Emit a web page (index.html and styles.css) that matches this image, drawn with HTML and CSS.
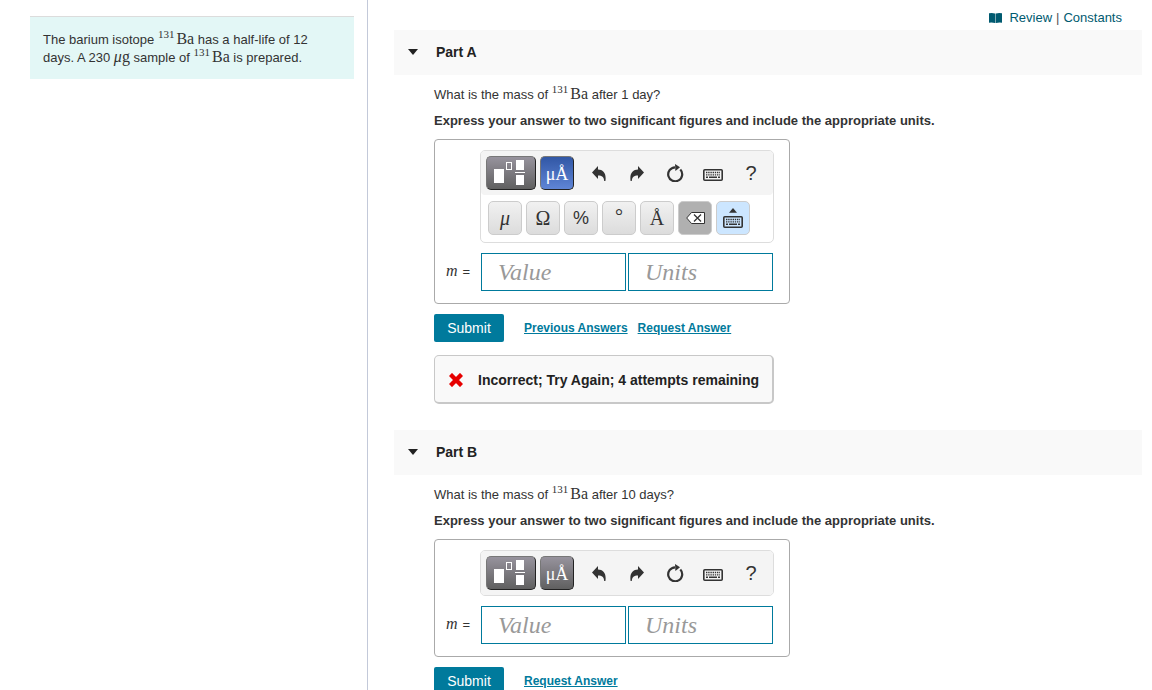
FILE: index.html
```html
<!DOCTYPE html>
<html lang="en">
<head>
  <meta charset="UTF-8">
  <meta name="viewport" content="width=device-width, initial-scale=1">
  <title>Barium half-life</title>
  <link rel="stylesheet" href="styles.css">
</head>
<body>
  <!-- shared icons -->
  <svg class="sprite" aria-hidden="true">
    <symbol id="i-template" viewBox="0 0 34 28">
      <rect x="0" y="10" width="10" height="14" fill="#fff"/>
      <rect x="12.500" y="3.500" width="5" height="7" fill="none" stroke="#fff"/>
      <rect x="22" y="1" width="8" height="10" fill="#fff"/>
      <rect x="21" y="13" width="10" height="1" fill="#fff"/>
      <rect x="22" y="16" width="8" height="10" fill="#fff"/>
    </symbol>
    <symbol id="i-undo" viewBox="0 0 14 15">
      <path d="M6 0v3.600c5.200 0 8.600 4 7.400 11.400h-1.200C12 10.800 10 9.400 6 9.400V13L0 6.600z" fill="#333"/>
    </symbol>
    <symbol id="i-redo" viewBox="0 0 14 15">
      <path d="M8 0v3.600C2.800 3.600-.6 7.600.6 15h1.200C2 10.800 4 9.400 8 9.400V13l6-6.400z" fill="#333"/>
    </symbol>
    <symbol id="i-reset" viewBox="0 0 17 18">
      <path d="M13.300 5.500A7 7 0 1 1 8 3.300" fill="none" stroke="#333" stroke-width="2.200"/>
      <path d="M8 0l5 3.300-4.600 3.600z" fill="#333"/>
    </symbol>
    <symbol id="i-keyboard" viewBox="0 0 20 12">
      <rect x=".8" y=".8" width="18.400" height="10.400" rx="1" fill="none" stroke="#333" stroke-width="1.600"/>
      <path d="M3 3.500h14M3 5.800h14" stroke="#333" stroke-width="1.300" stroke-dasharray="1.400 .8"/>
      <path d="M3 8.300h2M6 8.300h8M15 8.300h2" stroke="#333" stroke-width="1.400"/>
    </symbol>
    <symbol id="i-backspace" viewBox="0 0 19 12">
      <path d="M5.500.5h13v11h-13L.7 6z" fill="#fff" stroke="#333"/>
      <path d="M8 2.500l7 7M15 2.500l-7 7" stroke="#333" stroke-width="1.300"/>
    </symbol>
    <symbol id="i-keyboard-up" viewBox="0 0 20 20">
      <path d="M6 4.800L10 0l4 4.800z" fill="#333"/>
      <rect x=".8" y="8.800" width="18.400" height="10.400" rx="1" fill="none" stroke="#333" stroke-width="1.600"/>
      <path d="M3 11.500h14M3 13.800h14" stroke="#333" stroke-width="1.300" stroke-dasharray="1.400 .8"/>
      <path d="M3 16.300h2M6 16.300h8M15 16.300h2" stroke="#333" stroke-width="1.400"/>
    </symbol>
  </svg>

  <div class="page">
    <aside class="sidebar">
      <p class="intro">The barium isotope <span class="math"><sup>131</sup>Ba</span> has a half-life of 12 days. A 230 <span class="math"><i>μ</i>g</span> sample of <span class="math"><sup>131</sup>Ba</span> is prepared.</p>
    </aside>

    <main class="content">
      <nav class="top-links">
        <svg class="book" width="13" height="10" viewBox="0 0 13 10" aria-hidden="true">
          <path d="M0 .3Q3.500-.2 6 .5V10Q3.500 9.300 0 9.700zM13 .3Q9.500-.2 7 .5V10Q9.500 9.300 13 9.700z" fill="#005a70"/>
          <path d="M6.500 .5v9.500" stroke="#7fa9b4"/>
        </svg>
        <a href="#">Review</a>
        <span class="divider">|</span>
        <a href="#">Constants</a>
      </nav>

      <section class="part">
        <h2 class="part-header"><span class="caret"></span>Part A</h2>
        <div class="part-body">
          <p class="question">What is the mass of <span class="math"><sup>131</sup>Ba</span> after 1 day?</p>
          <p class="instructions">Express your answer to two significant figures and include the appropriate units.</p>
          <div class="answer-box">
            <div class="palette">
              <div class="toolbar">
                <button class="dark wide" aria-label="Templates"><svg width="34" height="28"><use href="#i-template"/></svg></button>
                <button class="dark units active">μÅ</button>
                <div class="tools">
                  <button aria-label="Undo"><svg width="14" height="15"><use href="#i-undo"/></svg></button>
                  <button aria-label="Redo"><svg width="14" height="15"><use href="#i-redo"/></svg></button>
                  <button aria-label="Reset"><svg width="17" height="18"><use href="#i-reset"/></svg></button>
                  <button class="low" aria-label="Keyboard shortcuts"><svg width="20" height="12"><use href="#i-keyboard"/></svg></button>
                  <button>?</button>
                </div>
              </div>
              <div class="symbols">
                <button><i>μ</i></button>
                <button>Ω</button>
                <button class="percent">%</button>
                <button class="degree">°</button>
                <button>Å</button>
                <button class="delete" aria-label="Delete"><svg width="19" height="12"><use href="#i-backspace"/></svg></button>
                <button class="collapse" aria-label="Hide keyboard"><svg width="20" height="20"><use href="#i-keyboard-up"/></svg></button>
              </div>
            </div>
            <div class="answer-row">
              <label for="valueA"><i>m</i>=</label>
              <input type="text" id="valueA" placeholder="Value">
              <input type="text" id="unitsA" placeholder="Units" aria-label="Units">
            </div>
          </div>
          <div class="actions">
            <button class="submit">Submit</button>
            <a href="#">Previous Answers</a>
            <a href="#">Request Answer</a>
          </div>
          <div class="feedback">
            <svg width="14" height="14" viewBox="0 0 14 14" aria-hidden="true">
              <path d="M3 3l8 8M11 3l-8 8" stroke="#e60000" stroke-width="4.400" stroke-linecap="square"/>
            </svg>
            Incorrect; Try Again; 4 attempts remaining
          </div>
        </div>
      </section>

      <section class="part">
        <h2 class="part-header"><span class="caret"></span>Part B</h2>
        <div class="part-body">
          <p class="question">What is the mass of <span class="math"><sup>131</sup>Ba</span> after 10 days?</p>
          <p class="instructions">Express your answer to two significant figures and include the appropriate units.</p>
          <div class="answer-box">
            <div class="palette">
              <div class="toolbar">
                <button class="dark wide" aria-label="Templates"><svg width="34" height="28"><use href="#i-template"/></svg></button>
                <button class="dark units">μÅ</button>
                <div class="tools">
                  <button aria-label="Undo"><svg width="14" height="15"><use href="#i-undo"/></svg></button>
                  <button aria-label="Redo"><svg width="14" height="15"><use href="#i-redo"/></svg></button>
                  <button aria-label="Reset"><svg width="17" height="18"><use href="#i-reset"/></svg></button>
                  <button class="low" aria-label="Keyboard shortcuts"><svg width="20" height="12"><use href="#i-keyboard"/></svg></button>
                  <button>?</button>
                </div>
              </div>
            </div>
            <div class="answer-row">
              <label for="valueB"><i>m</i>=</label>
              <input type="text" id="valueB" placeholder="Value">
              <input type="text" id="unitsB" placeholder="Units" aria-label="Units">
            </div>
          </div>
          <div class="actions">
            <button class="submit">Submit</button>
            <a href="#">Request Answer</a>
          </div>
        </div>
      </section>
    </main>
  </div>
</body>
</html>
```
FILE: styles.css
```css
* {
  box-sizing: border-box;
}

body {
  margin: 0;
  font-family: "Liberation Sans", Arial, sans-serif;
  font-size: 13px;
  line-height: 18px;
  color: #333;
  background: #fff;
}

p, h2 {
  margin: 0;
}

button {
  padding: 0;
  font-family: inherit;
  cursor: pointer;
}

.sprite {
  display: none;
}

.page {
  display: flex;
  min-height: 100vh;
}

/* left column */
.sidebar {
  flex: 0 0 368px;
  padding: 16px 13px 0 30px;
  border-right: 1px solid #c3c9d9;
}

.intro {
  padding: 14px 13px 12px;
  background: #e3f7f6;
  border-top: 1px solid #dcdcdc;
}

.math {
  font-family: "Liberation Serif", "Times New Roman", serif;
  font-size: 16px;
  line-height: 12px;
}

.math sup {
  margin-right: 2px;
  font-size: 11px;
  line-height: 2px;
  vertical-align: 6px;
}

/* right column */
.content {
  flex: 1;
  min-width: 0;
  padding: 0 10px 0 26px;
}

.top-links {
  display: flex;
  justify-content: flex-end;
  align-items: center;
  gap: 4px;
  height: 30px;
  padding: 6px 20px 0 0;
}

.top-links a {
  color: #005a70;
  text-decoration: none;
}

.top-links .book {
  margin-right: 3px;
}

.divider {
  color: #555;
}

.part {
  margin-bottom: 26px;
}

.part-header {
  display: flex;
  align-items: center;
  gap: 18px;
  height: 45px;
  padding: 0 0 2px 14px;
  background: #f9f9f9;
  color: #222;
  font-size: 14px;
}

.caret {
  border: 5px solid transparent;
  border-top: 6px solid #222;
  border-bottom: 0;
}

.part-body {
  padding: 11px 0 0 40px;
}

.instructions {
  padding: 8px 0 9px;
  font-weight: bold;
}

.answer-box {
  width: 356px;
  padding: 10px 15px 12px 0;
  border: 1px solid #aaa;
  border-radius: 4px;
}

.palette {
  margin-left: 45px;
  border: 1px solid #ddd;
  border-radius: 5px;
}

.palette button {
  display: flex;
  align-items: center;
  justify-content: center;
  width: 34px;
  height: 34px;
  border: 1px solid #ccc;
  border-radius: 5px;
  background: linear-gradient(#f1f1f1, #dcdcdc);
  color: #333;
  font-family: "Liberation Serif", "Times New Roman", serif;
  font-size: 20px;
}

.toolbar {
  display: flex;
  gap: 4px;
  padding: 5px;
  border-radius: 4px;
  background: #f4f4f4;
}

.palette .dark {
  border-color: #777 #222 #222 #777;
  background: linear-gradient(#97939d, #606060);
  color: #fff;
  font-size: 18px;
}

.palette .wide {
  width: 50px;
}

.palette .units {
  padding-top: 3px;
}

.palette .active {
  background: linear-gradient(#3157a5, #5f85d6);
}

.tools {
  display: flex;
  gap: 4px;
  margin-left: 4px;
}

.palette .tools button {
  border: 0;
  background: none;
  font-family: "Liberation Sans", Arial, sans-serif;
}

.palette .tools .low {
  padding-top: 4px;
}

.symbols {
  display: flex;
  gap: 4px;
  padding: 6px 7px 7px;
}

.palette .percent {
  font-family: "Liberation Sans", Arial, sans-serif;
  font-size: 18px;
}

.palette .degree {
  align-items: flex-start;
  padding-top: 3px;
}

.palette .delete {
  background: #b0b0b0;
}

.palette .collapse {
  background: #cce6ff;
}

.answer-row {
  display: flex;
  align-items: center;
  gap: 2px;
  margin-top: 10px;
  padding-right: 1px;
}

.answer-row label {
  width: 44px;
  padding-left: 11px;
}

.answer-row label i {
  margin-right: 5px;
  font-family: "Liberation Serif", "Times New Roman", serif;
  font-size: 16px;
  line-height: 16px;
}

.answer-row input {
  flex: 1;
  min-width: 0;
  height: 38px;
  padding: 0 16px;
  border: 1px solid #007a9c;
  font: italic 24px "Liberation Serif", "Times New Roman", serif;
}

.answer-row input::placeholder {
  color: #999;
}

.actions {
  display: flex;
  align-items: center;
  gap: 10px;
  margin-top: 10px;
}

.actions a {
  color: #007a9c;
  font-size: 12px;
  font-weight: bold;
}

.submit {
  width: 70px;
  height: 28px;
  margin-right: 10px;
  border: 0;
  border-radius: 2px;
  background: #007a9c;
  color: #fff;
  font-size: 14px;
}

.feedback {
  display: flex;
  align-items: center;
  gap: 15px;
  width: 340px;
  height: 49px;
  margin-top: 13px;
  padding: 2px 0 0 14px;
  border: 1px solid #c8c8c8;
  border-width: 1px 2px 2px 1px;
  border-radius: 5px;
  background: #f9f9f9;
  color: #222;
  font-size: 14px;
  font-weight: bold;
  white-space: nowrap;
}
```
